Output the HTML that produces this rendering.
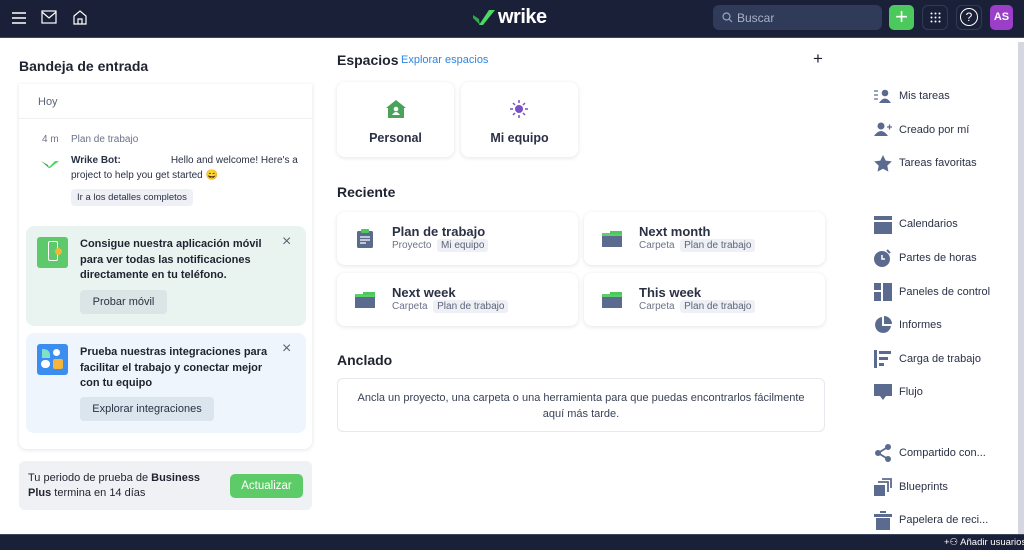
<!DOCTYPE html>
<html><head><meta charset="utf-8"><style>
*{box-sizing:border-box;margin:0;padding:0}
body{width:1024px;height:550px;overflow:hidden;background:#fff;font-family:"Liberation Sans",sans-serif;color:#1f2330;position:relative}
.abs{position:absolute}
.nav{left:0;top:0;width:1024px;height:38px;background:#1a2038;border-bottom:1px solid #3a4560}
.card{background:#fff;border-radius:8px;box-shadow:0 1px 4px rgba(20,30,60,.12)}
.h{font-weight:bold;font-size:14px;color:#1f2330}
.tag{background:#eef0f5;border-radius:3px;padding:1px 4px;color:#5b6478;font-size:10px}
.rc .t{position:absolute;left:55px;top:12px;font-size:13px;font-weight:bold;color:#2a3145}
.rc .s{position:absolute;left:55px;top:28px;font-size:10px;color:#6b7387}
.nl{position:absolute;left:899px;font-size:11px;color:#2a3145}
.ic{position:absolute;left:874px}
</style></head><body>
<div class="abs nav">
 <svg class="abs" style="left:12px;top:11px" width="14" height="14" viewBox="0 0 14 14"><path d="M0 2h14M0 7h14M0 12h14" stroke="#fff" stroke-width="1.4"/></svg>
 <svg class="abs" style="left:41px;top:10px" width="16" height="14" viewBox="0 0 16 14"><rect x="1" y="1" width="14" height="12" fill="none" stroke="#fff" stroke-width="1.2"/><path d="M1 2l7 6 7-6" fill="none" stroke="#fff" stroke-width="1.2"/></svg>
 <svg class="abs" style="left:72px;top:9px" width="16" height="16" viewBox="0 0 16 16"><path d="M2 7l6-5 6 5v8H2z M6 15v-5h4v5" fill="none" stroke="#fff" stroke-width="1.2"/></svg>
 <svg class="abs" style="left:472px;top:9px" width="24" height="16" viewBox="0 0 24 16"><path d="M1 6l6 4 1 6L1 9z" fill="#2faa4b"/><path d="M7 16L17 1h6L11 16z" fill="#4cd964"/></svg>
 <div class="abs" style="left:498px;top:6px;color:#fff;font-size:20px;font-weight:bold;letter-spacing:-.5px">wrike</div>
 <div class="abs" style="left:713px;top:5px;width:169px;height:25px;background:#2f3b59;border-radius:6px"></div>
 <svg class="abs" style="left:722px;top:12px" width="11" height="11" viewBox="0 0 11 11"><circle cx="4.5" cy="4.5" r="3.5" fill="none" stroke="#9aa4bb" stroke-width="1.2"/><path d="M7 7l3 3" stroke="#9aa4bb" stroke-width="1.2"/></svg>
 <div class="abs" style="left:737px;top:11px;color:#a8b1c6;font-size:12px">Buscar</div>
 <div class="abs" style="left:889px;top:5px;width:25px;height:25px;background:#4cc95c;border-radius:5px;color:#fff;font-size:22px;line-height:24px;text-align:center">+</div>
 <div class="abs" style="left:922px;top:5px;width:26px;height:25px;border:1px solid #2f3b59;border-radius:6px"></div>
 <svg class="abs" style="left:930px;top:12px" width="11" height="11" viewBox="0 0 11 11" fill="#fff"><circle cx="1.5" cy="1.5" r="1"/><circle cx="5.5" cy="1.5" r="1"/><circle cx="9.5" cy="1.5" r="1"/><circle cx="1.5" cy="5.5" r="1"/><circle cx="5.5" cy="5.5" r="1"/><circle cx="9.5" cy="5.5" r="1"/><circle cx="1.5" cy="9.5" r="1"/><circle cx="5.5" cy="9.5" r="1"/><circle cx="9.5" cy="9.5" r="1"/></svg>
 <div class="abs" style="left:956px;top:5px;width:26px;height:25px;border:1px solid #2f3b59;border-radius:6px"></div>
 <div class="abs" style="left:960px;top:8px;width:18px;height:18px;border:1.5px solid #fff;border-radius:50%;color:#fff;font-size:12px;text-align:center;line-height:16px">?</div>
 <div class="abs" style="left:990px;top:5px;width:23px;height:25px;background:#9b3fc8;border-radius:5px;color:#fff;font-size:11px;font-weight:bold;text-align:center;line-height:25px">AS</div>
</div>

<div class="abs h" style="left:19px;top:58px;font-size:14px">Bandeja de entrada</div>
<div class="abs card" style="left:19px;top:84px;width:293px;height:365px;border-radius:0 0 8px 8px"></div>
<div class="abs" style="left:19px;top:118px;width:293px;height:1px;background:#eef0f4"></div>
<div class="abs" style="left:38px;top:96px;font-size:11px;color:#5b6478">Hoy</div>
<div class="abs" style="left:42px;top:134px;font-size:10px;color:#6b7387">4 m</div>
<div class="abs" style="left:71px;top:134px;font-size:10px;color:#6b7387">Plan de trabajo</div>
<svg class="abs" style="left:41px;top:158px" width="18" height="10" viewBox="0 0 18 10"><path d="M0 3l7 4 1 3z" fill="#2faa4b"/><path d="M7 10L14 3h4L9 10z" fill="#4cd964"/></svg>
<div class="abs" style="left:71px;top:153px;width:230px;font-size:10px;line-height:15px;color:#2a3145"><b>Wrike Bot:</b><span style="display:inline-block;width:50px"></span>Hello and welcome! Here's a project to help you get started 😄</div>
<div class="abs" style="left:71px;top:189px;background:#eef0f5;border-radius:4px;padding:3px 6px;font-size:9.5px;color:#2a3145">Ir a los detalles completos</div>

<div class="abs" style="left:26px;top:226px;width:280px;height:100px;background:#e9f4f0;border-radius:8px"></div>
<div class="abs" style="left:37px;top:237px;width:31px;height:31px;background:#5ec96a;border-radius:3px"></div>
<div class="abs" style="left:48px;top:241px;width:10px;height:20px;border:1.5px solid #fff;border-radius:2px"></div>
<div class="abs" style="left:55px;top:248px;width:7px;height:7px;background:#f5b43a;border-radius:50%"></div>
<div class="abs" style="left:80px;top:237px;width:200px;font-size:11px;font-weight:bold;line-height:15.5px;color:#1f2330">Consigue nuestra aplicación móvil para ver todas las notificaciones directamente en tu teléfono.</div>
<div class="abs" style="left:282px;top:233px;font-size:16px;color:#5b6478">×</div>
<div class="abs" style="left:80px;top:290px;width:87px;height:24px;background:#dbe5e6;border-radius:4px;font-size:11px;line-height:24px;text-align:center;color:#2a3145">Probar móvil</div>

<div class="abs" style="left:26px;top:333px;width:280px;height:100px;background:#eef5fc;border-radius:8px"></div>
<div class="abs" style="left:37px;top:344px;width:31px;height:31px;background:#3b8ef0;border-radius:3px"></div>
<div class="abs" style="left:42px;top:349px;width:8px;height:9px;background:#7de0c7;border-radius:0 6px 0 0"></div>
<div class="abs" style="left:53px;top:349px;width:7px;height:7px;background:#fff;border-radius:50%"></div>
<div class="abs" style="left:41px;top:360px;width:9px;height:8px;background:#fff;border-radius:4px"></div>
<div class="abs" style="left:53px;top:359px;width:10px;height:10px;background:#f5b43a;border-radius:2px"></div>
<div class="abs" style="left:80px;top:345px;width:200px;font-size:11px;font-weight:bold;line-height:15.5px;color:#1f2330">Prueba nuestras integraciones para facilitar el trabajo y conectar mejor con tu equipo</div>
<div class="abs" style="left:282px;top:340px;font-size:16px;color:#5b6478">×</div>
<div class="abs" style="left:80px;top:397px;width:134px;height:24px;background:#dbe5ee;border-radius:4px;font-size:11px;line-height:24px;text-align:center;color:#2a3145">Explorar integraciones</div>

<div class="abs" style="left:19px;top:461px;width:293px;height:49px;background:#f0f1f5;border-radius:6px"></div>
<div class="abs" style="left:28px;top:471px;width:190px;font-size:11px;line-height:15px;color:#1f2330">Tu periodo de prueba de <b>Business Plus</b> termina en 14 días</div>
<div class="abs" style="left:230px;top:474px;width:73px;height:24px;background:#5ccb68;border-radius:5px;color:#fff;font-size:11.5px;text-align:center;line-height:24px">Actualizar</div>

<div class="abs h" style="left:337px;top:52px">Espacios</div>
<div class="abs" style="left:400px;top:54px;font-size:11px;color:#2f86e0;background:#fff;padding-left:1px">Explorar espacios</div>
<div class="abs" style="left:813px;top:49px;font-size:17px;color:#1f2330">+</div>
<div class="abs card" style="left:337px;top:82px;width:117px;height:75px"></div>
<svg class="abs" style="left:386px;top:100px" width="20" height="18" viewBox="0 0 20 18"><path d="M10 0L20 8h-2v10H2V8H0z" fill="#4aa35a"/><circle cx="10" cy="9" r="2.3" fill="#fff"/><path d="M6 15q4-6 8 0z" fill="#fff"/></svg>
<div class="abs" style="left:337px;top:131px;width:117px;text-align:center;font-size:12.5px;font-weight:bold;color:#2a3145">Personal</div>
<div class="abs card" style="left:461px;top:82px;width:117px;height:75px"></div>
<svg class="abs" style="left:509px;top:99px" width="20" height="20" viewBox="0 0 20 20"><circle cx="10" cy="10" r="4" fill="#7a4fc8"/><path d="M10 1v3M10 16v3M1 10h3M16 10h3M4 4l2 2M14 14l2 2M4 16l2-2M14 6l2-2" stroke="#7a4fc8" stroke-width="1.5"/></svg>
<div class="abs" style="left:461px;top:131px;width:117px;text-align:center;font-size:12.5px;font-weight:bold;color:#2a3145">Mi equipo</div>

<div class="abs h" style="left:337px;top:184px">Reciente</div>
<div class="abs card rc" style="left:337px;top:212px;width:241px;height:53px"><svg class="abs" style="left:20px;top:17px" width="16" height="19" viewBox="0 0 16 19"><rect y="2" width="16" height="17" rx="1.5" fill="#5b6a8f"/><rect x="4" width="8" height="4" rx="1" fill="#4cc95c"/><path d="M3 8h10M3 11h10M3 14h6" stroke="#fff" stroke-width="1.3"/></svg><div class="t">Plan de trabajo</div><div class="s">Proyecto &nbsp;<span class="tag">Mi equipo</span></div></div>
<div class="abs card rc" style="left:584px;top:212px;width:241px;height:53px"><svg class="abs" style="left:18px;top:19px" width="20" height="16" viewBox="0 0 20 16"><rect x="8" width="12" height="3" fill="#4cc95c"/><rect y="2" width="20" height="3" fill="#4cc95c" opacity=".9"/><rect y="5" width="20" height="11" fill="#5b6a8f"/></svg><div class="t">Next month</div><div class="s">Carpeta &nbsp;<span class="tag">Plan de trabajo</span></div></div>
<div class="abs card rc" style="left:337px;top:273px;width:241px;height:53px"><svg class="abs" style="left:18px;top:19px" width="20" height="16" viewBox="0 0 20 16"><rect x="8" width="12" height="3" fill="#4cc95c"/><rect y="2" width="20" height="3" fill="#4cc95c" opacity=".9"/><rect y="5" width="20" height="11" fill="#5b6a8f"/></svg><div class="t">Next week</div><div class="s">Carpeta &nbsp;<span class="tag">Plan de trabajo</span></div></div>
<div class="abs card rc" style="left:584px;top:273px;width:241px;height:53px"><svg class="abs" style="left:18px;top:19px" width="20" height="16" viewBox="0 0 20 16"><rect x="8" width="12" height="3" fill="#4cc95c"/><rect y="2" width="20" height="3" fill="#4cc95c" opacity=".9"/><rect y="5" width="20" height="11" fill="#5b6a8f"/></svg><div class="t">This week</div><div class="s">Carpeta &nbsp;<span class="tag">Plan de trabajo</span></div></div>

<div class="abs h" style="left:337px;top:352px">Anclado</div>
<div class="abs" style="left:337px;top:378px;width:488px;height:54px;border:1px solid #e6e8ee;border-radius:6px;text-align:center;font-size:11px;line-height:16px;color:#3a4257;padding-top:11px">Ancla un proyecto, una carpeta o una herramienta para que puedas encontrarlos fácilmente<br>aquí más tarde.</div>

<svg class="ic" style="top:89px" width="18" height="14" viewBox="0 0 18 14" fill="#5b6a8f"><path d="M0 2h4M0 6h4M0 10h4" stroke="#5b6a8f" stroke-width="1.3"/><circle cx="11" cy="4" r="3.3"/><path d="M5 14q6-9 12 0z"/></svg>
<div class="nl" style="top:90px">Mis tareas</div>
<svg class="ic" style="top:122px" width="18" height="14" viewBox="0 0 18 14" fill="#5b6a8f"><circle cx="7" cy="4" r="3.5"/><path d="M0 14q7-10 14 0z"/><path d="M13 5h5M15.5 2.5v5" stroke="#5b6a8f" stroke-width="1.3"/></svg>
<div class="nl" style="top:124px">Creado por mí</div>
<svg class="ic" style="top:155px" width="18" height="17" viewBox="0 0 18 17"><path d="M9 0l2.7 5.6 6.1.8-4.5 4.2 1.1 6L9 13.7 3.6 16.6l1.1-6L.2 6.4l6.1-.8z" fill="#5b6a8f"/></svg>
<div class="nl" style="top:157px">Tareas favoritas</div>
<svg class="ic" style="top:216px" width="18" height="18" viewBox="0 0 18 18" fill="#5b6a8f"><rect width="18" height="4"/><rect y="6" width="18" height="12"/></svg>
<div class="nl" style="top:218px">Calendarios</div>
<svg class="ic" style="top:249px" width="18" height="18" viewBox="0 0 18 18"><circle cx="8" cy="10" r="8" fill="#5b6a8f"/><path d="M8 6v4h3" stroke="#fff" stroke-width="1.5" fill="none"/><path d="M13 1l3 3" stroke="#5b6a8f" stroke-width="2"/></svg>
<div class="nl" style="top:252px">Partes de horas</div>
<svg class="ic" style="top:283px" width="18" height="18" viewBox="0 0 18 18" fill="#5b6a8f"><rect width="7" height="7"/><rect y="9" width="7" height="9"/><rect x="9" width="9" height="18"/></svg>
<div class="nl" style="top:286px">Paneles de control</div>
<svg class="ic" style="top:316px" width="18" height="18" viewBox="0 0 18 18" fill="#5b6a8f"><path d="M8 1a8 8 0 1 0 9 9H8z"/><path d="M10 0a8 8 0 0 1 8 8h-8z"/></svg>
<div class="nl" style="top:319px">Informes</div>
<svg class="ic" style="top:350px" width="18" height="18" viewBox="0 0 18 18" fill="#5b6a8f"><rect width="3" height="18"/><rect x="5" y="1" width="12" height="3"/><rect x="5" y="7" width="9" height="3"/><rect x="5" y="13" width="5" height="3"/></svg>
<div class="nl" style="top:353px">Carga de trabajo</div>
<svg class="ic" style="top:384px" width="18" height="17" viewBox="0 0 18 17" fill="#5b6a8f"><path d="M0 0h18v12h-6l-3 4-3-4H0z"/></svg>
<div class="nl" style="top:386px">Flujo</div>
<svg class="ic" style="top:444px" width="18" height="18" viewBox="0 0 18 18"><path d="M14 3L4 9l10 6" stroke="#5b6a8f" stroke-width="1.8" fill="none"/><circle cx="14" cy="3" r="3" fill="#5b6a8f"/><circle cx="4" cy="9" r="3" fill="#5b6a8f"/><circle cx="14" cy="15" r="3" fill="#5b6a8f"/></svg>
<div class="nl" style="top:447px">Compartido con...</div>
<svg class="ic" style="top:478px" width="18" height="18" viewBox="0 0 18 18" fill="#5b6a8f"><rect y="7" width="11" height="11"/><path d="M4 4h10v10" stroke="#5b6a8f" stroke-width="1.8" fill="none"/><path d="M8 1h9v9" stroke="#5b6a8f" stroke-width="1.8" fill="none"/></svg>
<div class="nl" style="top:481px">Blueprints</div>
<svg class="ic" style="top:511px" width="18" height="19" viewBox="0 0 18 19" fill="#5b6a8f"><rect x="6" width="6" height="2"/><rect y="3" width="18" height="3"/><rect x="2" y="7" width="14" height="12"/></svg>
<div class="nl" style="top:514px">Papelera de reci...</div>

<div class="abs" style="left:1018px;top:42px;width:6px;height:492px;background:#d4d7df"></div>
<div class="abs" style="left:0;top:534px;width:1024px;height:16px;background:#1a2038;border-top:1px solid #3a4560"></div>
<div class="abs" style="left:944px;top:537px;font-size:9.5px;color:#fff;white-space:nowrap">+⚇ Añadir usuarios</div>
</body></html>
